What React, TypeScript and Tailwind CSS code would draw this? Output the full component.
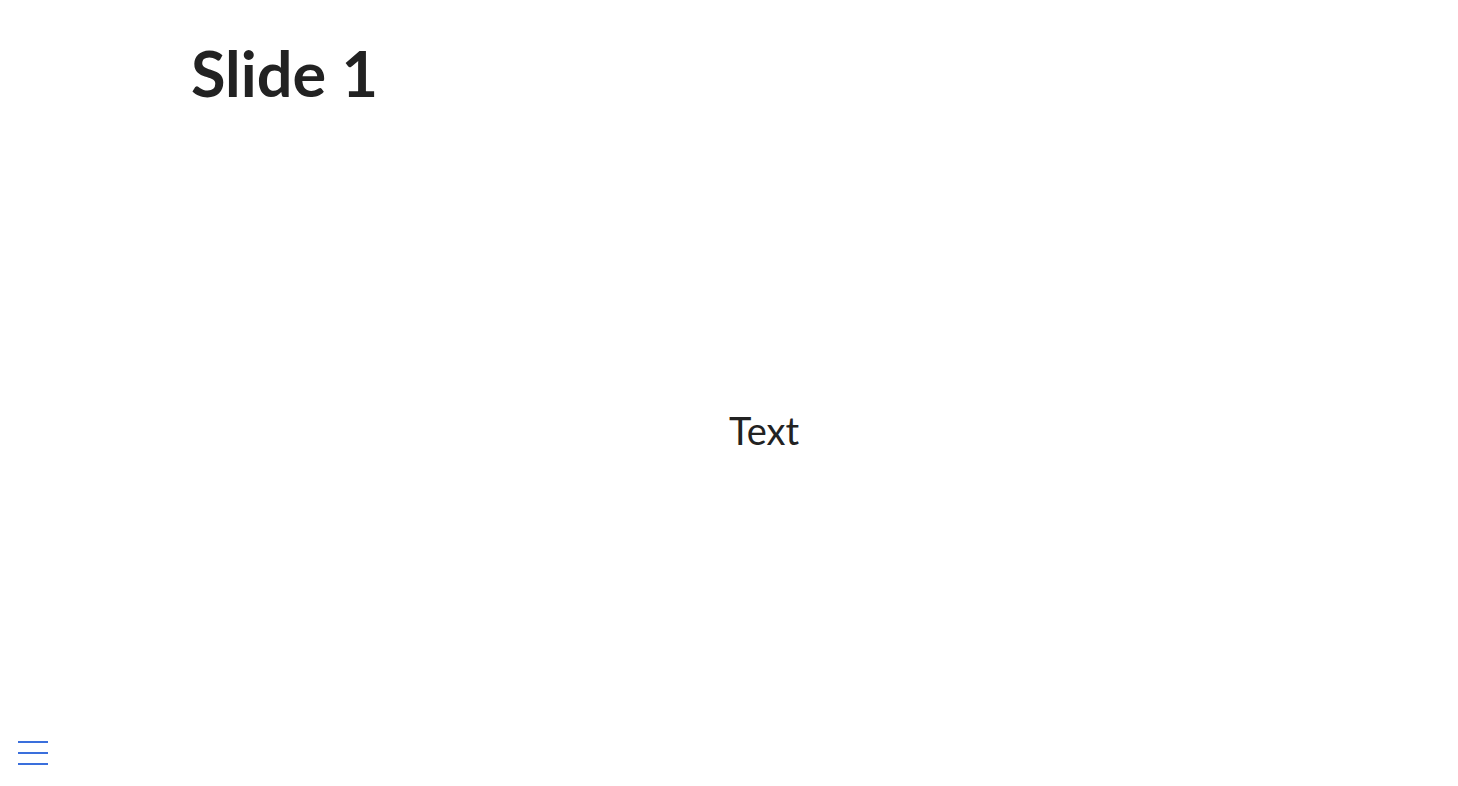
import { useState } from "react";

type Slide = {
  title: string;
  body: string;
};

const SLIDES: Slide[] = [{ title: "Slide 1", body: "Text" }];

function MenuButton() {
  return (
    <button
      type="button"
      aria-label="Open menu"
      className="absolute bottom-[20px] left-[18px] flex h-[26px] w-[30px] flex-col justify-between py-[1px]"
    >
      <span className="block h-[2px] w-full bg-[#3a6fdc]" />
      <span className="block h-[2px] w-full bg-[#3a6fdc]" />
      <span className="block h-[2px] w-full bg-[#3a6fdc]" />
    </button>
  );
}

export default function App() {
  const [index] = useState(0);
  const slide = SLIDES[index];

  return (
    <div
      className="relative flex h-[786px] w-full flex-col overflow-hidden bg-white text-[#222222]"
      style={{ fontFamily: "Lato, 'Open Sans', sans-serif" }}
    >
      <h1 className="pl-[191px] pt-[33px] text-[63px] leading-[80px] font-bold">
        {slide.title}
      </h1>
      <div className="flex flex-1 items-center justify-center pb-[40px] pl-[70px]">
        <p className="text-[38px] leading-[48px]">{slide.body}</p>
      </div>
      <MenuButton />
    </div>
  );
}
